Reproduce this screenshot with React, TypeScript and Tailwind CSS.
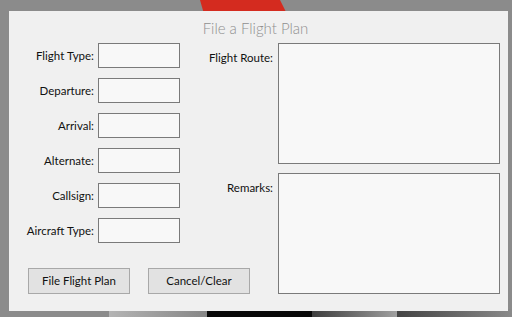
import React from 'react'

const fields = ['Flight Type:', 'Departure:', 'Arrival:', 'Alternate:', 'Callsign:', 'Aircraft Type:']

export default function App() {
  return (
    <div className="relative w-[512px] h-[317px] overflow-hidden bg-[#8b8b8b]" style={{ fontFamily: 'Lato, "Liberation Sans", sans-serif' }}>
      {/* scenery behind the window */}
      <div className="absolute top-0 left-[200px] w-[86px] h-[12px] bg-[#d42b1f] [clip-path:polygon(0_0,93%_0,100%_100%,4%_100%)]" />
      <div className="absolute bottom-0 left-[109px] w-[98px] h-[8px] bg-gradient-to-r from-[#b4b4b4] to-[#868686]" />
      <div className="absolute bottom-0 left-[207px] w-[105px] h-[8px] bg-[#080808]" />
      <div className="absolute bottom-0 left-[312px] w-[85px] h-[8px] bg-gradient-to-r from-[#3e3e3e] to-[#a0a0a0]" />
      <div className="absolute bottom-0 left-[397px] w-[115px] h-[8px] bg-gradient-to-r from-[#444] to-[#8a8a8a]" />

      <div className="relative pt-[11px] pl-[9px]">
        <div className="w-[499px] h-[300px] bg-[#f0f0f0] flex flex-col">
          <div className="h-[32px] flex items-center justify-center pt-[2px] pr-[6px] text-[15px] font-light text-[#8f8f8f]">
            File a Flight Plan
          </div>
          <div className="flex">
            <div className="w-[171px] shrink-0 flex flex-col">
              <div className="flex flex-col gap-[10px]">
                {fields.map((f) => (
                  <div key={f} className="flex items-center gap-[4px]">
                    <span className="w-[85px] text-right text-[11.5px] text-[#111]">{f}</span>
                    <div className="w-[82px] h-[25px] bg-[#f8f8f8] border border-[#7a7a7a]" />
                  </div>
                ))}
              </div>
              <div className="flex gap-[18px] pl-[19px] mt-[25px]">
                <button className="w-[102px] h-[26px] shrink-0 bg-[#e2e2e2] border border-[#a8a8a8] text-[11.5px] text-[#111]">
                  File Flight Plan
                </button>
                <button className="w-[102px] h-[26px] shrink-0 bg-[#e2e2e2] border border-[#a8a8a8] text-[11.5px] text-[#111]">
                  Cancel/Clear
                </button>
              </div>
            </div>
            <div className="flex flex-col gap-[9px]">
              <div className="flex gap-[5px]">
                <span className="w-[93px] text-right text-[11.5px] text-[#111] pt-[6px]">Flight Route:</span>
                <div className="w-[222px] h-[121px] bg-[#f8f8f8] border border-[#7a7a7a]" />
              </div>
              <div className="flex gap-[5px]">
                <span className="w-[93px] text-right text-[11.5px] text-[#111] pt-[6px]">Remarks:</span>
                <div className="w-[222px] h-[121px] bg-[#f8f8f8] border border-[#7a7a7a]" />
              </div>
            </div>
          </div>
        </div>
      </div>
    </div>
  )
}
